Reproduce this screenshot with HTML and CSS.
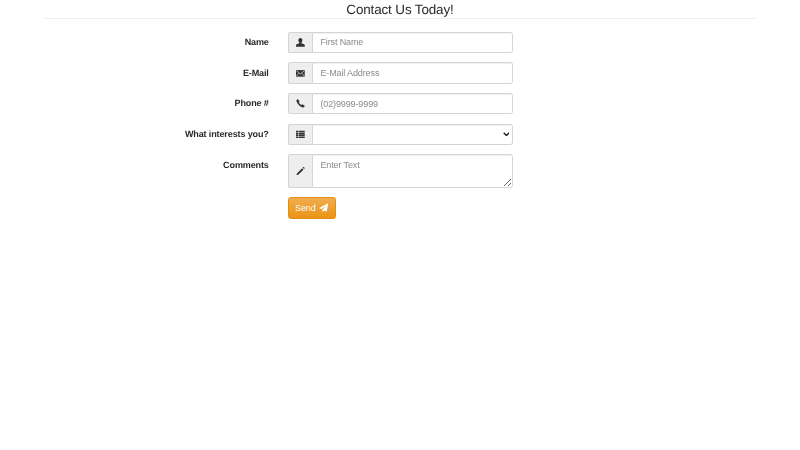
FILE: index.html
```html
<!DOCTYPE html>
<html lang="en">
<head>
<meta charset="utf-8">
<title>Contact Us</title>
<link rel="stylesheet" href="styles.css">
</head>
<body>
<main class="container">
  <h1 class="title">Contact Us Today!</h1>
  <hr class="rule">
  <form class="form">
    <div class="row">
      <label class="label">Name</label>
      <div class="group">
        <span class="addon"><svg class="icon" viewBox="0 0 12 12"><path d="M6 0c1.700 0 2.800 1.300 2.800 3.100 0 1.300-.5 2.500-1.300 3.200v.9l3.500 1.500c.6.300 1 .7 1 1.300V12H0v-2c0-.6.4-1 1-1.300l3.500-1.500v-.9C3.700 5.600 3.200 4.400 3.200 3.100 3.200 1.300 4.300 0 6 0z"/></svg></span>
        <input class="control" type="text" placeholder="First Name">
      </div>
    </div>
    <div class="row">
      <label class="label">E-Mail</label>
      <div class="group">
        <span class="addon"><svg class="icon" viewBox="0 0 12 12"><path d="M0 1.500h12v9H0z"/><path class="cut" d="M.5 2.300 6 6.800l5.500-4.500M.5 9.800l3.900-4.200M11.500 9.800 7.600 5.600"/></svg></span>
        <input class="control" type="text" placeholder="E-Mail Address">
      </div>
    </div>
    <div class="row">
      <label class="label">Phone #</label>
      <div class="group">
        <span class="addon"><svg class="icon" viewBox="0 0 12 12"><path d="M2.800.2 4.600 2.800c.2.300.2.600 0 .9l-.9.900c.4 1 2.700 3.300 3.700 3.700l.9-.9c.3-.2.600-.2.900 0l2.600 1.800c.2.200.2.400.1.600-.6 1.200-1.500 1.900-2.600 1.700C5 10 2 6.800.6 3 .3 1.900.9.900 2.200.2c.2-.1.400-.1.600 0z"/></svg></span>
        <input class="control" type="text" placeholder="(02)9999-9999">
      </div>
    </div>
    <div class="row">
      <label class="label">What interests you?</label>
      <div class="group">
        <span class="addon"><svg class="icon" viewBox="0 0 12 12"><path d="M0 1h2.800v2.200H0zM3.500 1H12v2.200H3.500zM0 3.800h2.800V5.700H0zM3.500 3.800H12V5.700H3.500zM0 6.300h2.800v1.900H0zM3.500 6.300H12v1.900H3.500zM0 8.800h2.800V11H0zM3.500 8.800H12V11H3.500z"/></svg></span>
        <div class="select-wrap">
          <select class="control select"><option></option></select>
          <svg class="chevron" viewBox="0 0 10 6"><path d="M1 1l4 4 4-4"/></svg>
        </div>
      </div>
    </div>
    <div class="row">
      <label class="label">Comments</label>
      <div class="group">
        <span class="addon"><svg class="icon" viewBox="0 0 12 12"><path d="M8.400 1.800 10.200 3.600 3.400 10.400 0 12l1.600-3.400zM9.200 1l.6-.6c.4-.4.900-.4 1.300 0l.5.500c.4.400.4.900 0 1.300l-.6.600z"/></svg></span>
        <textarea class="control area" placeholder="Enter Text"></textarea>
      </div>
    </div>
    <div class="row">
      <span class="label"></span>
      <button class="send" type="button">Send <svg class="send-icon" viewBox="0 0 12 12"><path d="M12 0 9.800 11 6.300 9.500 4.500 12V8.700L10 2.500 3.200 8 0 6.500z"/></svg></button>
    </div>
  </form>
</main>
</body>
</html>
```
FILE: styles.css
```css
html, body {
  margin: 0;
  padding: 0;
  background: #fff;
}
body {
  font-family: "Liberation Sans", Arial, sans-serif;
  font-size: 14.5px;
  letter-spacing: -.22px;
  line-height: 20px;
  color: #2a2a2a;
}
.container {
  zoom: 0.625;
  width: 1140px;
  margin: 0 auto;
  text-rendering: geometricPrecision;
  filter: blur(0.4px);
}
.title {
  margin: 0;
  padding-top: 1px;
  font-size: 21.5px;
  font-weight: 400;
  letter-spacing: -.2px;
  line-height: 28px;
  text-align: center;
  color: #2a2a2a;
}
.rule {
  margin: 0 0 20px;
  border: 0;
  border-top: 1px solid #eee;
}
.form {
  display: flex;
  flex-direction: column;
  gap: 15px;
}
.row {
  display: flex;
  gap: 30px;
}
.label {
  width: 360px;
  flex: none;
  padding-top: 7px;
  font-weight: 700;
  text-align: right;
  box-sizing: border-box;
}
.group {
  display: flex;
  width: 360px;
}
.addon {
  display: flex;
  align-items: center;
  justify-content: center;
  width: 39px;
  flex: none;
  box-sizing: border-box;
  background: #eee;
  border: 1px solid #d4d4d4;
  border-right: 0;
  border-radius: 4px 0 0 4px;
}
.icon {
  width: 14px;
  height: 14px;
  fill: #333;
}
.cut {
  fill: none;
  stroke: #eee;
  stroke-width: .9;
}
.control {
  flex: 1;
  min-width: 0;
  height: 34px;
  box-sizing: border-box;
  margin: 0;
  padding: 6px 12px;
  font: 14.5px/20px "Liberation Sans", Arial, sans-serif;
  letter-spacing: -.22px;
  color: #555;
  background: #fff;
  border: 1px solid #d4d4d4;
  border-radius: 0 4px 4px 0;
  box-shadow: inset 0 1px 1px rgba(0, 0, 0, .075);
}
.control::placeholder {
  color: #8a8a8a;
  opacity: 1;
}
.select-wrap {
  position: relative;
  flex: 1;
  display: flex;
}
.select {
  appearance: none;
}
.chevron {
  position: absolute;
  right: 5px;
  top: 13px;
  width: 11px;
  height: 7px;
  fill: none;
  stroke: #222;
  stroke-width: 2;
  pointer-events: none;
}
.area {
  height: 54px;
  display: block;
}
.send {
  display: flex;
  align-items: center;
  justify-content: center;
  gap: 5px;
  width: 77px;
  height: 34px;
  padding: 0;
  font: 14.5px "Liberation Sans", Arial, sans-serif;
  letter-spacing: -.22px;
  color: #fff;
  background: linear-gradient(#f0ad4e, #eb9316);
  border: 1px solid #e38d13;
  border-radius: 4px;
}
.send-icon {
  width: 15px;
  height: 15px;
  fill: #fff;
}
```
